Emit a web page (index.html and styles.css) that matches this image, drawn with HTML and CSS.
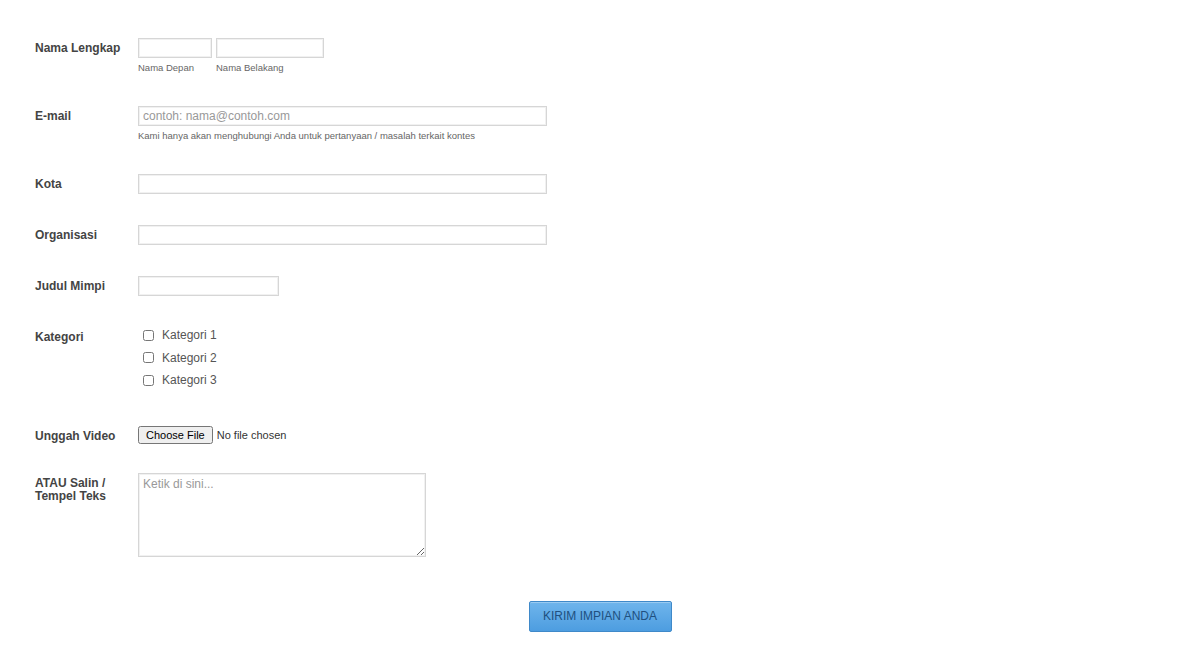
FILE: index.html
```html
<!DOCTYPE html>
<html lang="id">
<head>
  <meta charset="UTF-8">
  <meta name="viewport" content="width=device-width, initial-scale=1.0">
  <title>Kirim Impian Anda</title>
  <link rel="stylesheet" href="styles.css">
</head>
<body>
  <form class="dream-form">
    <div class="row">
      <label class="row-label">Nama Lengkap</label>
      <div class="name-fields">
        <div class="field">
          <input type="text" class="input input-first">
          <span class="sub">Nama Depan</span>
        </div>
        <div class="field">
          <input type="text" class="input input-last">
          <span class="sub">Nama Belakang</span>
        </div>
      </div>
    </div>

    <div class="row">
      <label class="row-label">E-mail</label>
      <div class="field">
        <input type="email" class="input input-wide" placeholder="contoh: nama@contoh.com">
        <span class="sub">Kami hanya akan menghubungi Anda untuk pertanyaan / masalah terkait kontes</span>
      </div>
    </div>

    <div class="row">
      <label class="row-label">Kota</label>
      <input type="text" class="input input-wide">
    </div>

    <div class="row">
      <label class="row-label">Organisasi</label>
      <input type="text" class="input input-wide">
    </div>

    <div class="row">
      <label class="row-label">Judul Mimpi</label>
      <input type="text" class="input input-mid">
    </div>

    <div class="row">
      <label class="row-label">Kategori</label>
      <div class="checks">
        <label class="check"><input type="checkbox"> Kategori 1</label>
        <label class="check"><input type="checkbox"> Kategori 2</label>
        <label class="check"><input type="checkbox"> Kategori 3</label>
      </div>
    </div>

    <div class="row row-upload">
      <label class="row-label">Unggah Video</label>
      <input type="file" class="file">
    </div>

    <div class="row">
      <label class="row-label">ATAU Salin / Tempel Teks</label>
      <textarea class="text-box" placeholder="Ketik di sini..."></textarea>
    </div>

    <div class="submit-wrap">
      <button type="button" class="submit">KIRIM IMPIAN ANDA</button>
    </div>
  </form>
</body>
</html>
```

FILE: styles.css
```css
body {
  margin: 0;
  font-family: "Liberation Sans", Arial, sans-serif;
  color: #333;
  background: #fff;
}

.dream-form {
  padding: 38px 35px 0;
}

.row {
  display: flex;
  align-items: flex-start;
  margin-bottom: 31px;
}

.row-label {
  width: 103px;
  flex-shrink: 0;
  padding-top: 4px;
  font-size: 12px;
  font-weight: bold;
  line-height: 13px;
  color: #444;
}

.name-fields {
  display: flex;
  gap: 4px;
}

.field {
  display: flex;
  flex-direction: column;
}

.sub {
  margin-top: 2px;
  font-size: 9.5px;
  line-height: 15px;
  color: #666;
}

.input {
  box-sizing: border-box;
  height: 20px;
  margin: 0;
  padding: 0 4px;
  border: 1px solid #d6d6d6;
  box-shadow: inset 0 0 0 1px #f1f1f1;
  font-family: inherit;
  font-size: 12px;
  color: #333;
  outline: none;
}

.input::placeholder,
.text-box::placeholder {
  color: #999;
}

.input-first { width: 74px; }
.input-last { width: 108px; }
.input-wide { width: 409px; }
.input-mid { width: 141px; }

.checks {
  display: flex;
  flex-direction: column;
  margin-top: -3px;
  padding-bottom: 3px;
}

.check {
  display: flex;
  align-items: center;
  height: 22.5px;
  font-size: 12px;
  color: #555;
}

.check input {
  width: 11px;
  height: 11px;
  margin: 0 8px 0 5px;
}

.row-upload {
  margin-bottom: 29px;
}

.file {
  font-family: inherit;
  font-size: 11px;
  color: #333;
}

.text-box {
  box-sizing: border-box;
  width: 288px;
  height: 84px;
  margin: 0;
  padding: 3px 4px;
  border: 1px solid #d6d6d6;
  box-shadow: inset 0 0 0 1px #f1f1f1;
  font-family: inherit;
  font-size: 12px;
  color: #333;
  outline: none;
}

.submit-wrap {
  text-align: center;
  margin-top: 44px;
}

.submit {
  width: 143px;
  height: 31px;
  border: 1px solid #3f89c9;
  border-radius: 2px;
  background: linear-gradient(#6fb5ec, #4d9de0);
  box-shadow: inset 0 1px 0 rgba(255, 255, 255, 0.3);
  font-family: inherit;
  font-size: 12px;
  color: #20507f;
  cursor: pointer;
}
```
